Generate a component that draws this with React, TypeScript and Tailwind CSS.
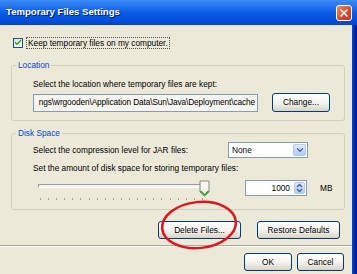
import { Check, ChevronDown, X } from 'lucide-react'

function XpButton({ label, className = '' }: { label: string; className?: string }) {
  return (
    <button
      className={`h-[18px] rounded-[3px] border border-[#003C74] bg-gradient-to-b from-white via-[#F5F4EF] to-[#D8D3C8] text-[8.3px] leading-none text-black ${className}`}
    >
      {label}
    </button>
  )
}

function Legend({ children }: { children: string }) {
  return (
    <div className="-mt-[6px] ml-[4px] w-fit bg-[#ECE9D8] px-[2px] leading-[10px] text-[#0046D5]">
      {children}
    </div>
  )
}

function Slider() {
  const ticks = Array.from({ length: 21 }, (_, i) => i)
  return (
    <div className="relative w-[180px] h-[17px]">
      {/* track */}
      <div className="mt-[4px] ml-[5px] h-[4px] w-[167px] border border-t-[#9D9C99] border-l-[#9D9C99] border-b-white border-r-white bg-[#F3F2EC]" />
      {/* ticks */}
      <div className="mt-[10px] ml-[7px] flex gap-[7.1px]">
        {ticks.map((t) => (
          <div key={t} className="h-[2px] w-px bg-[#A7A69E]" />
        ))}
      </div>
      {/* thumb */}
      <svg className="absolute left-[166px] top-0" width="11" height="17" viewBox="0 0 11 17">
        <path d="M1 1 H10 V12 L5.5 16 L1 12 Z" fill="#F7F6F2" stroke="#8C8B86" />
        <path d="M1.5 11 L5.5 15 L9.5 11" fill="none" stroke="#21A121" strokeWidth="1.5" />
      </svg>
    </div>
  )
}

export default function App() {
  return (
    <div className="relative h-[274px] w-[357px] overflow-hidden bg-[#ECE9D8] font-['Liberation_Sans',Arial,sans-serif] text-[8.3px] text-black">
      {/* Title bar */}
      <div className="flex h-[25px] items-center justify-between bg-gradient-to-b from-[#3C8CF7] via-[#0A5BE6] to-[#0347D4] pl-[6px] pr-[5px]">
        <span className="text-[9.6px] font-bold text-white [text-shadow:1px_1px_0_#0A1C70]">Temporary Files Settings</span>
        <div className="flex h-[16px] w-[16px] items-center justify-center rounded-[3px] border border-white bg-gradient-to-br from-[#EC8C6C] via-[#D9532E] to-[#B8371A]">
          <X size={12} strokeWidth={3} className="text-white" />
        </div>
      </div>

      <div className="flex h-[249px]">
        <div className="flex flex-1 flex-col">
          {/* Checkbox row */}
          <div className="mt-[12px] ml-[13px] flex h-[11px] items-center gap-[3px]">
            <div className="flex h-[10px] w-[10px] items-center justify-center border border-[#1C5180] bg-gradient-to-br from-[#DCDCD7] to-white">
              <Check size={9} strokeWidth={4} className="text-[#21A121]" />
            </div>
            <span className="border border-dotted border-[#555] px-[1px] leading-[10px]">Keep temporary files on my computer.</span>
          </div>

          {/* Location */}
          <div className="mt-[17px] ml-[11px] w-[334px] rounded-[3px] border border-[#D0D0BF] pb-[8px]">
            <Legend>Location</Legend>
            <div className="mt-[9px] ml-[21px] leading-[10px]">Select the location where temporary files are kept:</div>
            <div className="mt-[4px] ml-[21px] flex h-[19px] items-center gap-[14px]">
              <div className="flex h-[18px] w-[225px] items-center justify-end overflow-hidden border border-[#7F9DB9] bg-[#F5F4EE] px-[2px] whitespace-nowrap">
                <span className="shrink-0 tracking-[-0.12px]">ngs\wrgooden\Application Data\Sun\Java\Deployment\cache</span>
              </div>
              <XpButton label="Change..." className="h-[19px] w-[58px]" />
            </div>
          </div>

          {/* Disk Space */}
          <div className="mt-[12px] ml-[11px] w-[334px] rounded-[3px] border border-[#D0D0BF] pb-[12px]">
            <Legend>Disk Space</Legend>
            <div className="mt-[4px] ml-[21px] flex h-[16px] items-center">
              <span className="w-[195px]">Select the compression level for JAR files:</span>
              <div className="flex h-[16px] w-[80px] items-center justify-between border border-[#7F9DB9] bg-white pl-[3px] pr-[1px]">
                <span>None</span>
                <div className="flex h-[12px] w-[13px] items-center justify-center rounded-[2px] border border-[#B4C8F6] bg-gradient-to-b from-[#E1EAFE] to-[#B1C9F5]">
                  <ChevronDown size={10} strokeWidth={3} className="text-[#4D6185]" />
                </div>
              </div>
            </div>
            <div className="mt-[5px] ml-[21px] leading-[10px]">Set the amount of disk space for storing temporary files:</div>
            <div className="mt-[7px] ml-[21px] flex h-[17px] items-start">
              <Slider />
              <div className="ml-[32px] flex h-[16px] w-[62px] items-center justify-end border border-[#7F9DB9] bg-white pr-[1px]">
                <span className="mr-[4px]">1000</span>
                <div className="flex h-[12px] w-[11px] flex-col overflow-hidden rounded-[2px] border border-[#B4C8F6] bg-gradient-to-b from-[#E1EAFE] to-[#B1C9F5]">
                  <svg width="9" height="10" viewBox="0 0 9 10">
                    <path d="M2 4 L4.5 1.5 L7 4" fill="none" stroke="#4D6185" strokeWidth="1.5" />
                    <path d="M2 6 L4.5 8.5 L7 6" fill="none" stroke="#4D6185" strokeWidth="1.5" />
                  </svg>
                </div>
              </div>
              <span className="ml-[13px] leading-[16px]">MB</span>
            </div>
          </div>

          {/* Delete / Restore */}
          <div className="mt-[11px] flex justify-end gap-[16px] pr-[12px]">
            <XpButton label="Delete Files..." className="w-[83px]" />
            <XpButton label="Restore Defaults" className="w-[83px]" />
          </div>

          <div className="mt-[6px] border-t border-b border-t-[#ACA899] border-b-white" />

          {/* OK / Cancel */}
          <div className="mt-[6px] flex justify-end gap-[5px] pr-[8px]">
            <XpButton label="OK" className="w-[48px]" />
            <XpButton label="Cancel" className="w-[47px]" />
          </div>
        </div>
        <div className="w-[5px] bg-gradient-to-r from-[#0D44D8] to-[#00138C]" />
      </div>

      {/* Red annotation ellipse */}
      <svg className="pointer-events-none absolute left-0 top-0" width="357" height="274">
        <ellipse cx="199" cy="225" rx="37" ry="23" fill="none" stroke="#E0141C" strokeWidth="2.5" transform="rotate(-6 199 225)" />
      </svg>
    </div>
  )
}
